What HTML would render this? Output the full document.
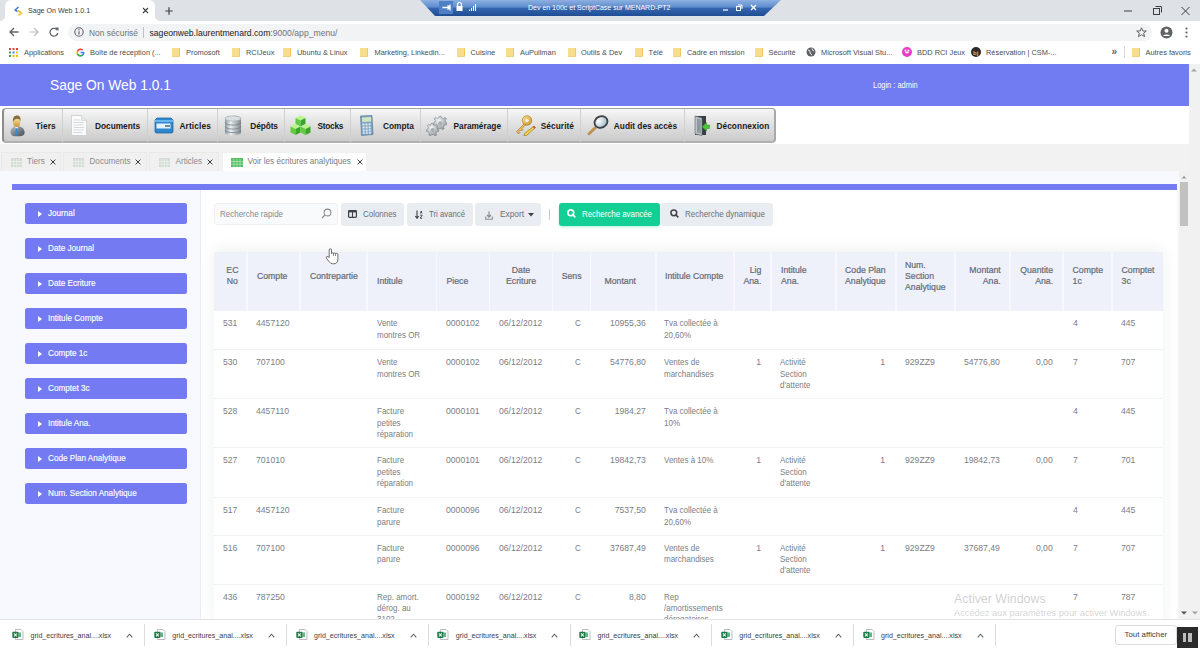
<!DOCTYPE html>
<html><head><meta charset="utf-8">
<style>
*{box-sizing:border-box;margin:0;padding:0}
html,body{width:1200px;height:650px;overflow:hidden;background:#fff;font-family:"Liberation Sans",sans-serif;position:relative}
.a{position:absolute}
.t{position:absolute;white-space:nowrap}
/* chrome */
#tabbar{left:0;top:0;width:1200px;height:21px;background:#dee1e6}
#tab{left:5px;top:0;width:150px;height:21px;background:#fff;border-radius:6px 6px 0 0}
#addr{left:0;top:21px;width:1200px;height:22px;background:#fff}
#omni{left:68px;top:24px;width:1084px;height:17px;background:#f1f3f4;border-radius:9px}
#bm{left:0;top:43px;width:1200px;height:21px;background:#fff}
.bmt{font-size:7.4px;color:#4a4d51;top:47.5px}
.fold{position:absolute;top:48px;width:8px;height:9px;background:#f7de8e;border-right:1px solid #ecc865;border-bottom:1px solid #efd27a;border-radius:0.5px}
/* header */
#hdr{left:0;top:64px;width:1189px;height:42px;background:#717bf2}
#tb{left:2px;top:108px;width:774px;height:35px;border-radius:4px;background:linear-gradient(#f6f6f6,#e2e2e2 45%,#cbcbcb);border-style:solid;border-width:1.5px 2px 2px 2px;border-color:#a2a2a2 #a8a8a8 #b0b0b0 #8c8c8c}
.tbt{font-size:8.3px;font-weight:bold;color:#1a1a1a;top:120.6px}
.tbsep{position:absolute;top:109px;width:1px;height:33px;background:#d0d0d0}
#tabsrow{left:0;top:144px;width:1189px;height:27px;background:#f2f2f2}
.ptab{position:absolute;top:152px;height:19px;background:#f0f0f0;border:1px solid #e9e9e9;border-bottom:none}
.ptt{font-size:8.15px;color:#8c8c8c;top:157px}
/* body */
#side{left:0;top:171px;width:1177px;height:449px;background:#f8f9fe}
#main{left:200px;top:190px;width:977px;height:430px;background:#fff;border-left:1px solid #ebecef}
#pbar{left:12px;top:184px;width:1165px;height:6px;background:#737af2}
.sb{position:absolute;left:25px;width:162px;height:21.3px;background:#737af2;border-radius:2.5px}
.sbt{position:absolute;left:23px;top:5.3px;font-size:8.8px;color:#fff;white-space:nowrap;transform:scaleX(0.925);transform-origin:0 0;-webkit-text-stroke:0.15px #fff}
.tri{position:absolute;left:12.8px;top:7.5px;width:0;height:0;border-left:4.2px solid #fff;border-top:3.6px solid transparent;border-bottom:3.6px solid transparent}
#scroll{left:1177px;top:172px;width:23px;height:448px;background:#f1f1f1}
#dl{left:0;top:619px;width:1200px;height:31px;background:#fff;border-top:1px solid #e2e3e6}

.btn{position:absolute;top:202.5px;height:23.3px;background:#e9ecf0;border-radius:3px}
.bt{position:absolute;top:208.8px;font-size:9px;color:#6c7079;white-space:nowrap;transform-origin:0 0}
#card{left:214px;top:252px;width:949px;height:370px;background:#fff;box-shadow:0 -2px 14px rgba(30,40,60,0.07)}
#thead{left:214px;top:252px;width:949px;height:58.5px;background:#eef0fa}
.cd{position:absolute;top:252px;width:1.5px;height:58.5px;background:#f7f8fd}
.rl{position:absolute;left:214px;width:949px;height:1px;background:#f1f2f5}
.h{position:absolute;font-size:8.7px;color:#656a75;white-space:nowrap;line-height:11px;-webkit-text-stroke:0.2px #656a75}
.c{position:absolute;font-size:9.1px;color:#7b7e86;white-space:nowrap;line-height:11.25px;transform-origin:0 0}
.c.w{transform:scaleX(0.88)}
.c.n{transform:scaleX(0.95)}
.c.r{transform-origin:100% 0}
.c.ce{transform-origin:50% 0}
</style></head><body>
<div id="tabbar" class="a"></div>
<div id="tab" class="a"></div>
<div class="a" style="left:155px;top:16px;width:6px;height:5px;background:#fff"></div><div class="a" style="left:155px;top:16px;width:6px;height:5px;background:#dee1e6;border-bottom-left-radius:5px"></div>
<div class="a" style="left:0;top:16px;width:5px;height:5px;background:#fff"></div><div class="a" style="left:0;top:16px;width:5px;height:5px;background:#dee1e6;border-bottom-right-radius:5px"></div>
<div id="addr" class="a"></div>
<div id="omni" class="a"></div>
<div id="bm" class="a"></div>

<!-- CHROME TAB BAR -->
<svg class="a" style="left:14px;top:6px" width="9" height="10" viewBox="0 0 9 10"><path d="M4.5 1 L1.2 4 L3.5 5.6" fill="none" stroke="#4a7cc9" stroke-width="1.6"/><path d="M4 4.5 L7.6 7 L4.5 9.4" fill="none" stroke="#f4c430" stroke-width="1.6"/></svg>
<div class="t" style="left:28px;top:7px;font-size:7.1px;color:#3c4043">Sage On Web 1.0.1</div>
<svg class="a" style="left:141.5px;top:7.2px" width="7" height="7" viewBox="0 0 7 7"><path d="M1 1L6 6M6 1L1 6" stroke="#3c4043" stroke-width="1.1"/></svg>
<svg class="a" style="left:164.7px;top:6.7px" width="8" height="8" viewBox="0 0 8 8"><path d="M4 0.3V7.7M0.3 4H7.7" stroke="#3c4043" stroke-width="1.2"/></svg>
<!-- window title -->
<svg class="a" style="left:420px;top:0" width="361" height="16" viewBox="0 0 361 16"><defs><linearGradient id="wg" x1="0" y1="0" x2="0" y2="1"><stop offset="0" stop-color="#8db0e0"/><stop offset="0.45" stop-color="#5d8ccd"/><stop offset="0.5" stop-color="#3566b0"/><stop offset="1" stop-color="#1f4d93"/></linearGradient></defs><path d="M0 0H361L344 16H15Z" fill="url(#wg)"/></svg>
<div class="a" style="left:439px;top:1px;width:14px;height:13px;background:#4f7fc4"></div>
<svg class="a" style="left:442px;top:4px" width="9" height="7" viewBox="0 0 9 7"><path d="M8 0.5V6.5M0.5 3.5H8M5.5 1.5L8 3.5L5.5 5.5" fill="none" stroke="#fff" stroke-width="1.3"/></svg>
<svg class="a" style="left:456px;top:2px" width="7" height="9" viewBox="0 0 7 9"><path d="M1.5 4V2.5A2 2 0 0 1 5.5 2.5V4" fill="none" stroke="#fff" stroke-width="1.2"/><rect x="0.5" y="4" width="6" height="5" fill="#fff"/></svg>
<svg class="a" style="left:469px;top:3px" width="8" height="8" viewBox="0 0 8 8"><path d="M0.5 8V6.5M2.5 8V5M4.5 8V3M6.5 8V1" stroke="#fff" stroke-width="1.1"/></svg>
<div class="t" style="left:528px;top:4px;font-size:7px;color:#fff">Dev en 100c et ScriptCase sur MENARD-PT2</div>
<svg class="a" style="left:722px;top:4px" width="36" height="7" viewBox="0 0 36 7"><path d="M1 6H6" stroke="#fff" stroke-width="1.2"/><rect x="14.5" y="2.5" width="4" height="4" fill="none" stroke="#fff"/><path d="M16 1H20V5" fill="none" stroke="#fff"/><path d="M29 1L34 6M34 1L29 6" stroke="#fff" stroke-width="1.3"/></svg>
<svg class="a" style="left:1124px;top:6px" width="72" height="10" viewBox="0 0 72 10"><path d="M0 5H8" stroke="#3c4043" stroke-width="1"/><rect x="29.5" y="2.5" width="6" height="6" fill="none" stroke="#3c4043"/><path d="M31.5 0.5H37.5V6.5" fill="none" stroke="#3c4043"/><path d="M57.5 1L65.5 9M65.5 1L57.5 9" stroke="#3c4043" stroke-width="1"/></svg>
<!-- ADDRESS BAR -->
<svg class="a" style="left:9px;top:27px" width="10" height="10" viewBox="0 0 10 10"><path d="M9.5 5H1M5 1L1 5L5 9" fill="none" stroke="#5f6368" stroke-width="1.3"/></svg>
<svg class="a" style="left:29px;top:27px" width="10" height="10" viewBox="0 0 10 10"><path d="M0.5 5H9M5 1L9 5L5 9" fill="none" stroke="#bdc1c6" stroke-width="1.2"/></svg>
<svg class="a" style="left:49px;top:27px" width="10" height="10" viewBox="0 0 10 10"><path d="M8.3 3.2A3.9 3.9 0 1 0 8.8 6" fill="none" stroke="#5f6368" stroke-width="1.3"/><path d="M6 0.5H9.5V4Z" fill="#5f6368"/></svg>
<svg class="a" style="left:74px;top:27px" width="10" height="10" viewBox="0 0 10 10"><circle cx="5" cy="5" r="4.2" fill="none" stroke="#5f6368" stroke-width="1.1"/><path d="M5 4.3V7.6" stroke="#5f6368" stroke-width="1.2"/><circle cx="5" cy="2.8" r="0.7" fill="#5f6368"/></svg>
<div class="t" style="left:89px;top:27.5px;font-size:8.4px;color:#70757a">Non sécurisé</div>
<div class="a" style="left:143px;top:27px;width:1px;height:11px;background:#bdc1c6"></div>
<div class="t" style="left:149.5px;top:27.5px;font-size:8.63px;color:#202124">sageonweb.laurentmenard.com<span style="color:#70757a">:9000/app_menu/</span></div>
<svg class="a" style="left:1136px;top:27px" width="11" height="11" viewBox="0 0 11 11"><path d="M5.5 0.8L6.9 4H10.3L7.6 6.2L8.6 9.7L5.5 7.7L2.4 9.7L3.4 6.2L0.7 4H4.1Z" fill="none" stroke="#5f6368" stroke-width="1"/></svg>
<svg class="a" style="left:1160px;top:26px" width="13" height="13" viewBox="0 0 13 13"><circle cx="6.5" cy="6.5" r="6" fill="#5f6368"/><circle cx="6.5" cy="4.8" r="2" fill="#fff"/><path d="M2.8 10A4.3 3 0 0 1 10.2 10" fill="#fff"/></svg>
<svg class="a" style="left:1185px;top:27px" width="3" height="11" viewBox="0 0 3 11"><circle cx="1.5" cy="1.5" r="1.1" fill="#5f6368"/><circle cx="1.5" cy="5.5" r="1.1" fill="#5f6368"/><circle cx="1.5" cy="9.5" r="1.1" fill="#5f6368"/></svg>
<!-- BOOKMARKS -->
<svg class="a" style="left:9px;top:48px" width="9" height="9" viewBox="0 0 9 9"><rect x="0" y="0" width="2" height="2" fill="#ea4335"/><rect x="3.5" y="0" width="2" height="2" fill="#ea4335"/><rect x="7" y="0" width="2" height="2" fill="#ea4335"/><rect x="0" y="3.5" width="2" height="2" fill="#34a853"/><rect x="3.5" y="3.5" width="2" height="2" fill="#4285f4"/><rect x="7" y="3.5" width="2" height="2" fill="#fbbc05"/><rect x="0" y="7" width="2" height="2" fill="#34a853"/><rect x="3.5" y="7" width="2" height="2" fill="#fbbc05"/><rect x="7" y="7" width="2" height="2" fill="#fbbc05"/></svg>
<div class="t bmt" style="left:24px">Applications</div>
<svg class="a" style="left:76px;top:48px" width="9" height="9" viewBox="0 0 24 24"><path d="M22.5 12.3c0-.8-.1-1.5-.2-2.3H12v4.3h5.9a5 5 0 0 1-2.2 3.3v2.7h3.5c2.1-1.9 3.3-4.8 3.3-8z" fill="#4285f4"/><path d="M12 23c3 0 5.5-1 7.2-2.7l-3.5-2.7c-1 .7-2.2 1.1-3.7 1.1-2.9 0-5.3-1.9-6.2-4.5H2.2v2.8A11 11 0 0 0 12 23z" fill="#34a853"/><path d="M5.8 14.2a6.6 6.6 0 0 1 0-4.3V7.1H2.2a11 11 0 0 0 0 9.9z" fill="#fbbc05"/><path d="M12 5.4c1.6 0 3.1.6 4.2 1.7l3.1-3.1A11 11 0 0 0 2.2 7.1l3.6 2.8C6.7 7.3 9.1 5.4 12 5.4z" fill="#ea4335"/></svg>
<div class="t bmt" style="left:90px">Boîte de réception (...</div>
<div class="fold" style="left:172px"></div><div class="t bmt" style="left:186px">Promosoft</div>
<div class="fold" style="left:232px"></div><div class="t bmt" style="left:246px">RCIJeux</div>
<div class="fold" style="left:283px"></div><div class="t bmt" style="left:297px">Ubuntu &amp; Linux</div>
<div class="fold" style="left:360px"></div><div class="t bmt" style="left:374.5px">Marketing, Linkedin...</div>
<div class="fold" style="left:457px"></div><div class="t bmt" style="left:470.5px">Cuisine</div>
<div class="fold" style="left:506px"></div><div class="t bmt" style="left:520px">AuPullman</div>
<div class="fold" style="left:567.5px"></div><div class="t bmt" style="left:581px">Outils &amp; Dev</div>
<div class="fold" style="left:635px"></div><div class="t bmt" style="left:648.5px">Télé</div>
<div class="fold" style="left:673px"></div><div class="t bmt" style="left:687px">Cadre en mission</div>
<div class="fold" style="left:755px"></div><div class="t bmt" style="left:768.5px">Sécurité</div>
<svg class="a" style="left:806px;top:47px" width="10" height="10" viewBox="0 0 10 10"><circle cx="5" cy="5" r="4.5" fill="#5f6368"/><path d="M2 3Q4 3 4 5T6 8M6 1.5Q6 3.5 8 4" fill="none" stroke="#fff" stroke-width="0.9"/></svg>
<div class="t bmt" style="left:821px">Microsoft Visual Stu...</div>
<svg class="a" style="left:902px;top:47px" width="10" height="10" viewBox="0 0 10 10"><circle cx="5" cy="5" r="5" fill="#e83ec8"/><path d="M2.5 4.5Q5 8.5 7.5 4.5" fill="#fff"/><circle cx="3.5" cy="3.3" r="0.9" fill="#fff"/><circle cx="6.5" cy="3.3" r="0.9" fill="#fff"/></svg>
<div class="t bmt" style="left:917px">BDD RCI Jeux</div>
<svg class="a" style="left:971px;top:47px" width="10" height="10" viewBox="0 0 10 10"><circle cx="5" cy="5" r="5" fill="#2b2b2b"/><text x="2" y="7.5" font-size="6" font-family="Liberation Sans" fill="#e0b050" font-weight="bold">bj</text></svg>
<div class="t bmt" style="left:986px">Réservation | CSM-...</div>
<div class="t bmt" style="left:1111.5px;top:45.5px;font-size:10px;font-weight:bold;color:#5f6368">»</div>
<div class="a" style="left:1124px;top:46px;width:1px;height:12px;background:#dadce0"></div>
<div class="fold" style="left:1132px"></div><div class="t bmt" style="left:1145.5px">Autres favoris</div>
<div id="hdr" class="a"></div>

<div class="t" style="left:50px;top:77.5px;font-size:13.8px;color:#fff">Sage On Web 1.0.1</div>
<div class="t" style="left:873px;top:80.5px;font-size:8.2px;color:#fff;transform:scaleX(0.91);transform-origin:0 0">Login : admin</div>
<div id="tb" class="a"></div>
<div class="tbsep" style="left:62px"></div>
<div class="tbsep" style="left:147px"></div>
<div class="tbsep" style="left:217px"></div>
<div class="tbsep" style="left:284px"></div>
<div class="tbsep" style="left:350px"></div>
<div class="tbsep" style="left:420px"></div>
<div class="tbsep" style="left:507px"></div>
<div class="tbsep" style="left:580px"></div>
<div class="tbsep" style="left:684px"></div>
<!-- icons -->
<svg class="a" style="left:9px;top:114.5px" width="17" height="22" viewBox="0 0 17 22">
<defs><linearGradient id="suit" x1="0" y1="0" x2="1" y2="1"><stop offset="0" stop-color="#b4bcc3"/><stop offset="0.6" stop-color="#6d767e"/><stop offset="1" stop-color="#4a5258"/></linearGradient>
<linearGradient id="face" x1="0" y1="0" x2="0" y2="1"><stop offset="0" stop-color="#f7e09a"/><stop offset="1" stop-color="#c8923c"/></linearGradient></defs>
<path d="M1.5 17C1.5 13.5 4 11.8 7 11.5H10C13.5 12 15.6 14.5 15.6 17.5C15.6 20 13.5 21.3 10.5 21.3H6C3 21.3 1.5 19.5 1.5 17Z" fill="url(#suit)"/>
<path d="M5.8 11.7L7.4 14.5L9.2 11.9Z" fill="#eef2f5"/>
<path d="M6.9 13.2H8L8.5 19L7.4 20.2L6.6 19Z" fill="#2f8ad8"/>
<ellipse cx="7.6" cy="7.6" rx="3.6" ry="4.5" fill="url(#face)"/>
<path d="M3.8 7C3.5 2.5 5.5 0.5 8 0.5C10.5 0.5 12 2.3 11.5 6.5C11 4.8 10 4 8.5 3.8C6.5 3.8 5 4.8 3.8 7Z" fill="#8c6d3c"/>
</svg>
<svg class="a" style="left:71px;top:115px" width="16" height="21" viewBox="0 0 16 21">
<path d="M0.5 0.5H10.5L15.5 5.5V20.5H0.5Z" fill="#fbfbfb" stroke="#c8ccd2" stroke-width="0.8"/><path d="M10.5 0.5V5.5H15.5" fill="#e4e6ea" stroke="#c8ccd2" stroke-width="0.6"/>
<path d="M2.5 5H9M2.5 7.5H13M2.5 10H13M2.5 12.5H13M2.5 15H13M2.5 17.5H11" stroke="#d2d5d9" stroke-width="0.9"/>
</svg>
<svg class="a" style="left:154px;top:117px" width="20" height="17" viewBox="0 0 20 17">
<path d="M1 3L3 1H17L19 3V15L18 16H2L1 15Z" fill="#2e87cf" stroke="#1b5f9e" stroke-width="0.7"/>
<path d="M1 3H19V5H1Z" fill="#69b6ec"/>
<rect x="2.5" y="6.5" width="14" height="5" fill="#e6f2fb"/><rect x="11" y="8" width="5" height="2" fill="#6b8ea8"/>
</svg>
<svg class="a" style="left:224px;top:115px" width="18" height="21" viewBox="0 0 18 21">
<defs><linearGradient id="db" x1="0" y1="0" x2="1" y2="0"><stop offset="0" stop-color="#8e979e"/><stop offset="0.35" stop-color="#e9eef1"/><stop offset="1" stop-color="#7f888f"/></linearGradient></defs>
<path d="M1 3.5A8 3 0 0 1 17 3.5V17.5A8 3 0 0 1 1 17.5Z" fill="url(#db)"/>
<ellipse cx="9" cy="3.5" rx="8" ry="2.6" fill="#d9e0e4" stroke="#9aa2a8" stroke-width="0.5"/>
<path d="M1 7.5A8 2.6 0 0 0 17 7.5M1 11.5A8 2.6 0 0 0 17 11.5M1 15A8 2.6 0 0 0 17 15" fill="none" stroke="#6f787f" stroke-width="0.7"/>
</svg>
<svg class="a" style="left:290px;top:115px" width="21" height="21" viewBox="0 0 21 21"><path d="M10.5 0.5L15.5 3.0L10.5 5.5L5.5 3.0Z" fill="#b9f48c"/><path d="M5.5 3.0L10.5 5.5V11.5L5.5 9.0Z" fill="#62cc3c"/><path d="M10.5 5.5L15.5 3.0V9.0L10.5 11.5Z" fill="#3aa526"/><path d="M5.5 9L10.5 11.5L5.5 14L0.5 11.5Z" fill="#b9f48c"/><path d="M0.5 11.5L5.5 14V20L0.5 17.5Z" fill="#62cc3c"/><path d="M5.5 14L10.5 11.5V17.5L5.5 20Z" fill="#3aa526"/><path d="M15.5 9L20.5 11.5L15.5 14L10.5 11.5Z" fill="#b9f48c"/><path d="M10.5 11.5L15.5 14V20L10.5 17.5Z" fill="#62cc3c"/><path d="M15.5 14L20.5 11.5V17.5L15.5 20Z" fill="#3aa526"/></svg>
<svg class="a" style="left:359px;top:115px" width="15" height="21" viewBox="0 0 15 21">
<path d="M1.5 1L13 0.5L14 19.5L2.5 20.5Z" fill="#7fa4c4" stroke="#4f6f8a" stroke-width="0.6"/>
<path d="M3 2.5L12 2L12.3 6.5L3.3 7Z" fill="#cfe6c0"/>
<g fill="#dfeaf4"><rect x="3.5" y="8.5" width="2" height="2"/><rect x="6.5" y="8.5" width="2" height="2"/><rect x="9.5" y="8.3" width="2" height="2"/><rect x="3.6" y="11.5" width="2" height="2"/><rect x="6.6" y="11.5" width="2" height="2"/><rect x="9.6" y="11.3" width="2" height="2"/><rect x="3.7" y="14.5" width="2" height="2"/><rect x="6.7" y="14.5" width="2" height="2"/><rect x="9.7" y="14.3" width="2" height="2"/><rect x="3.8" y="17.3" width="2" height="1.6"/><rect x="6.8" y="17.3" width="2" height="1.6"/><rect x="9.8" y="17.1" width="2" height="1.6"/></g>
</svg>
<svg class="a" style="left:426px;top:115px" width="21" height="21" viewBox="0 0 21 21">
<defs><radialGradient id="gear" cx="0.4" cy="0.35" r="0.7"><stop offset="0" stop-color="#f4f6f7"/><stop offset="1" stop-color="#8c9396"/></radialGradient></defs>
<g fill="url(#gear)" stroke="#7b8286" stroke-width="0.5">
<path d="M13 1.5L15 1L15.8 3L17.8 3.5L19 2.2L20.5 3.8L19.3 5.2L19.8 7.3L21 8L20.5 10L18.5 10.2L17.5 12L18.2 13.8L16.3 14.8L15 13.5L13 13.5L11.8 14.8L10 13.8L10.6 12L9.6 10.2L7.6 10L7.3 8L8.8 7.2L9.2 5.2L8 3.8L9.5 2.2L11 3.4L12.5 3Z"/>
<path d="M5 8.5L7 8.2L7.6 10L9.4 10.5L10.6 9.3L12 10.8L11 12.2L11.5 14L13 14.6L12.6 16.6L10.8 16.8L10 18.5L10.8 20L9 21L7.7 19.8L5.8 19.9L4.6 21L2.8 20L3.3 18.4L2.4 16.8L0.5 16.5L0.3 14.6L2 13.9L2.4 12.2L1.3 10.8L2.8 9.4L4.4 10.4Z"/>
</g>
<circle cx="14.2" cy="8.2" r="2" fill="#a7adb0"/><circle cx="6.6" cy="15" r="2" fill="#a7adb0"/>
</svg>
<svg class="a" style="left:515px;top:115px" width="21" height="21" viewBox="0 0 21 21">
<defs><linearGradient id="key" x1="0" y1="0" x2="1" y2="1"><stop offset="0" stop-color="#fbe48a"/><stop offset="1" stop-color="#c8902a"/></linearGradient></defs>
<circle cx="12" cy="5.5" r="4.8" fill="url(#key)" stroke="#a8741c" stroke-width="0.6"/><circle cx="12" cy="5.5" r="1.8" fill="#eee"/>
<path d="M9 9L1.5 16.5L3.5 19L5 17.5L4 16.5L5.5 15L6.5 16L8 14.5L7 13.5L11 9.5Z" fill="url(#key)" stroke="#a8741c" stroke-width="0.6"/>
<path d="M19 11L20.5 12.5L11.5 20.5L9 21L9.5 18.5Z" fill="#f2d04a" stroke="#8c6a18" stroke-width="0.6"/><path d="M18.3 11.6L20 13.2" stroke="#d04a30" stroke-width="1.4"/>
</svg>
<svg class="a" style="left:587px;top:114.5px" width="22" height="21" viewBox="0 0 22 21">
<defs><radialGradient id="lens" cx="0.35" cy="0.35" r="0.7"><stop offset="0" stop-color="#ffffff"/><stop offset="1" stop-color="#9fb9c8"/></radialGradient></defs>
<path d="M8 11.5L1 18.5Q0.8 20 2.4 19.8L9.6 13Z" fill="#c9963e" stroke="#8a5f20" stroke-width="0.5"/>
<ellipse cx="14" cy="7" rx="6.6" ry="5.6" transform="rotate(-25 14 7)" fill="url(#lens)" stroke="#3d4247" stroke-width="1.8"/>
</svg>
<svg class="a" style="left:694px;top:115px" width="16" height="21" viewBox="0 0 16 21">
<path d="M1 1H12V20H1Z" fill="#3a3f44"/><path d="M1 1L8 3V20.5L1 19Z" fill="#b8c2c8" stroke="#5a6268" stroke-width="0.6"/>
<path d="M3 3.5L6.8 4.5V18.5L3 17.5Z" fill="#8f9aa0"/>
<path d="M15.5 10V13.5H12.5V16L8 11.8L12.5 7.5V10Z" fill="#4cc43a" stroke="#2a8a22" stroke-width="0.5"/>
</svg>
<div class="t tbt" style="left:35.5px;letter-spacing:0.11px">Tiers</div>
<div class="t tbt" style="left:95px;letter-spacing:0px">Documents</div>
<div class="t tbt" style="left:179.5px;letter-spacing:0.13px">Articles</div>
<div class="t tbt" style="left:250.3px;letter-spacing:-0.1px">Dépôts</div>
<div class="t tbt" style="left:317.5px;letter-spacing:-0.25px">Stocks</div>
<div class="t tbt" style="left:383px;letter-spacing:0px">Compta</div>
<div class="t tbt" style="left:453.5px;letter-spacing:0px">Paramérage</div>
<div class="t tbt" style="left:540.7px;letter-spacing:0.08px">Sécurité</div>
<div class="t tbt" style="left:613.8px;letter-spacing:0.01px">Audit des accès</div>
<div class="t tbt" style="left:716.4px;letter-spacing:0.08px">Déconnexion</div>

<div id="tabsrow" class="a"></div>
<div class="ptab" style="left:1px;width:60px"></div><svg class="a" style="left:11px;top:157.5px" width="11" height="9" viewBox="0 0 11 9"><rect x="0" y="0" width="11" height="9" fill="#d3dcd3"/><path d="M2.75 1V9M5.5 1V9M8.25 1V9M0 3.5H11M0 6.2H11" stroke="#f4f6f4" stroke-width="0.6"/></svg><div class="t ptt" style="left:27px">Tiers</div><svg class="a" style="left:50px;top:158.5px" width="6" height="6" viewBox="0 0 6 6"><path d="M0.6 0.6L5.4 5.4M5.4 0.6L0.6 5.4" stroke="#3a3a3a" stroke-width="1"/></svg><div class="ptab" style="left:63px;width:84px"></div><svg class="a" style="left:73px;top:157.5px" width="11" height="9" viewBox="0 0 11 9"><rect x="0" y="0" width="11" height="9" fill="#d3dcd3"/><path d="M2.75 1V9M5.5 1V9M8.25 1V9M0 3.5H11M0 6.2H11" stroke="#f4f6f4" stroke-width="0.6"/></svg><div class="t ptt" style="left:89.5px">Documents</div><svg class="a" style="left:135px;top:158.5px" width="6" height="6" viewBox="0 0 6 6"><path d="M0.6 0.6L5.4 5.4M5.4 0.6L0.6 5.4" stroke="#3a3a3a" stroke-width="1"/></svg><div class="ptab" style="left:149px;width:70px"></div><svg class="a" style="left:159px;top:157.5px" width="11" height="9" viewBox="0 0 11 9"><rect x="0" y="0" width="11" height="9" fill="#d3dcd3"/><path d="M2.75 1V9M5.5 1V9M8.25 1V9M0 3.5H11M0 6.2H11" stroke="#f4f6f4" stroke-width="0.6"/></svg><div class="t ptt" style="left:175.5px">Articles</div><svg class="a" style="left:207px;top:158.5px" width="6" height="6" viewBox="0 0 6 6"><path d="M0.6 0.6L5.4 5.4M5.4 0.6L0.6 5.4" stroke="#3a3a3a" stroke-width="1"/></svg><div class="ptab" style="left:222px;width:145px;background:#fff;border-color:#f0f0f0;height:20px"></div><svg class="a" style="left:231px;top:157.5px" width="12" height="9" viewBox="0 0 12 9"><rect x="0" y="0" width="12" height="9" fill="#56c064"/><path d="M3 1V9M6 1V9M9 1V9M0 3.5H12M0 6.2H12" stroke="#c8eccc" stroke-width="0.6"/></svg><div class="t ptt" style="left:247.5px;color:#7a7d85">Voir les écritures analytiques</div><svg class="a" style="left:356.5px;top:158.5px" width="6" height="6" viewBox="0 0 6 6"><path d="M0.6 0.6L5.4 5.4M5.4 0.6L0.6 5.4" stroke="#3a3a3a" stroke-width="1"/></svg>
<div id="side" class="a"></div>
<div class="sb" style="top:203px"><div class="tri"></div><div class="sbt">Journal</div></div>
<div class="sb" style="top:238px"><div class="tri"></div><div class="sbt">Date Journal</div></div>
<div class="sb" style="top:273px"><div class="tri"></div><div class="sbt">Date Ecriture</div></div>
<div class="sb" style="top:308px"><div class="tri"></div><div class="sbt">Intitule Compte</div></div>
<div class="sb" style="top:343px"><div class="tri"></div><div class="sbt">Compte 1c</div></div>
<div class="sb" style="top:378px"><div class="tri"></div><div class="sbt">Comptet 3c</div></div>
<div class="sb" style="top:413px"><div class="tri"></div><div class="sbt">Intitule Ana.</div></div>
<div class="sb" style="top:448px"><div class="tri"></div><div class="sbt">Code Plan Analytique</div></div>
<div class="sb" style="top:483px"><div class="tri"></div><div class="sbt">Num. Section Analytique</div></div>

<div id="main" class="a"></div>
<div id="pbar" class="a"></div>
<div class="a" style="left:213.5px;top:203.3px;width:124px;height:22.2px;background:#f9fafc;border:1px solid #eef0f3;border-radius:3px"></div>
<div class="t" style="left:220.3px;top:208.8px;font-size:9px;color:#878a91;transform:scaleX(0.887);transform-origin:0 0">Recherche rapide</div>
<svg class="a" style="left:321px;top:208px" width="11" height="11" viewBox="0 0 11 11"><circle cx="6.5" cy="4.5" r="3.4" fill="none" stroke="#8a8d94" stroke-width="1.1"/><path d="M4 7L1 10" stroke="#8a8d94" stroke-width="1.2"/></svg>
<div class="btn" style="left:340.5px;width:63.5px"></div>
<svg class="a" style="left:348px;top:210px" width="9" height="8" viewBox="0 0 9 8"><rect x="0.6" y="0.6" width="7.8" height="6.8" rx="0.8" fill="none" stroke="#3e4249" stroke-width="1.2"/><rect x="0.6" y="0.6" width="7.8" height="1.8" fill="#3e4249"/><path d="M4.5 1V7.4" stroke="#3e4249" stroke-width="1.1"/></svg>
<div class="bt" style="left:363px;transform:scaleX(0.883)">Colonnes</div>
<div class="btn" style="left:407px;width:66px"></div>
<svg class="a" style="left:415px;top:209.5px" width="8" height="9" viewBox="0 0 8 9"><path d="M2 0.5V8M0.3 6L2 8.3L3.7 6" fill="none" stroke="#3e4249" stroke-width="1.1"/><path d="M5.5 3.5L6.2 1L6.9 3.5" fill="none" stroke="#3e4249" stroke-width="0.9"/><path d="M5.2 5.2H7.2L5.2 8.2H7.2" fill="none" stroke="#3e4249" stroke-width="0.9"/></svg>
<div class="bt" style="left:429px;transform:scaleX(0.864)">Tri avancé</div>
<div class="btn" style="left:475.3px;width:65.7px"></div>
<svg class="a" style="left:484.5px;top:210.5px" width="8" height="9" viewBox="0 0 8 9"><path d="M4 0.5V6M2 4L4 6.2L6 4" fill="none" stroke="#8a8d94" stroke-width="1.2"/><path d="M0.7 5.5V8.2H7.3V5.5" fill="none" stroke="#8a8d94" stroke-width="1.1"/></svg>
<div class="bt" style="left:499.8px;transform:scaleX(0.922)">Export</div>
<svg class="a" style="left:528px;top:213px" width="6" height="4" viewBox="0 0 6 4"><path d="M0 0H6L3 3.5Z" fill="#3e4249"/></svg>
<div class="a" style="left:549.3px;top:208.7px;width:1px;height:11px;background:#c8cbd0"></div>
<div class="btn" style="left:559px;width:101px;background:#14cf95;box-shadow:0 1px 3px rgba(20,207,149,0.35)"></div>
<svg class="a" style="left:566.5px;top:209.3px" width="9" height="9" viewBox="0 0 9 9"><circle cx="3.8" cy="3.8" r="2.9" fill="none" stroke="#fff" stroke-width="1.6"/><path d="M6 6L8.3 8.3" stroke="#fff" stroke-width="1.8"/></svg>
<div class="bt" style="left:581.7px;color:#fff;transform:scaleX(0.874)">Recherche avancée</div>
<div class="btn" style="left:661.3px;width:111.7px"></div>
<svg class="a" style="left:669.5px;top:209.3px" width="9" height="9" viewBox="0 0 9 9"><circle cx="3.8" cy="3.8" r="2.9" fill="none" stroke="#3e4249" stroke-width="1.5"/><path d="M6 6L8.3 8.3" stroke="#3e4249" stroke-width="1.7"/></svg>
<div class="bt" style="left:684.7px;transform:scaleX(0.888)">Recherche dynamique</div>
<!--TABLE-->
<div id="card" class="a"></div>
<div id="thead" class="a"></div>
<div class="cd" style="left:246.25px"></div>
<div class="cd" style="left:299.25px"></div>
<div class="cd" style="left:366.25px"></div>
<div class="cd" style="left:435.75px"></div>
<div class="cd" style="left:488.75px"></div>
<div class="cd" style="left:551.75px"></div>
<div class="cd" style="left:589.75px"></div>
<div class="cd" style="left:655.25px"></div>
<div class="cd" style="left:733.25px"></div>
<div class="cd" style="left:770.25px"></div>
<div class="cd" style="left:835.25px"></div>
<div class="cd" style="left:895.25px"></div>
<div class="cd" style="left:954.25px"></div>
<div class="cd" style="left:1009.25px"></div>
<div class="cd" style="left:1062.25px"></div>
<div class="cd" style="left:1111.25px"></div>
<div class="h" style="left:182.4px;width:100px;text-align:center;top:264.8px">EC</div>
<div class="h" style="left:182.4px;width:100px;text-align:center;top:275.7px">No</div>
<div class="h" style="left:257px;top:270.5px">Compte</div>
<div class="h" style="left:310px;top:270.5px">Contrepartie</div>
<div class="h" style="left:377px;top:275.5px">Intitule</div>
<div class="h" style="left:446.5px;top:275.5px">Piece</div>
<div class="h" style="left:471px;width:100px;text-align:center;top:264.8px">Date</div>
<div class="h" style="left:471px;width:100px;text-align:center;top:275.7px">Ecriture</div>
<div class="h" style="left:521.6px;width:100px;text-align:center;top:270.5px">Sens</div>
<div class="h" style="left:604.5px;top:275.5px">Montant</div>
<div class="h" style="left:665px;top:270.5px">Intitule Compte</div>
<div class="h" style="right:438.70000000000005px;top:264.8px">Lig</div>
<div class="h" style="right:438.70000000000005px;top:275.7px">Ana.</div>
<div class="h" style="left:781px;top:264.8px">Intitule</div>
<div class="h" style="left:781px;top:275.7px">Ana.</div>
<div class="h" style="right:314.4px;top:264.8px">Code Plan</div>
<div class="h" style="right:314.4px;top:275.7px">Analytique</div>
<div class="h" style="left:905px;top:259.5px">Num.</div>
<div class="h" style="left:905px;top:270.5px">Section</div>
<div class="h" style="left:905px;top:281.9px">Analytique</div>
<div class="h" style="right:199.29999999999995px;top:264.8px">Montant</div>
<div class="h" style="right:199.29999999999995px;top:275.7px">Ana.</div>
<div class="h" style="right:146.9000000000001px;top:264.8px">Quantite</div>
<div class="h" style="right:146.9000000000001px;top:275.7px">Ana.</div>
<div class="h" style="left:1072.6px;top:264.8px">Compte</div>
<div class="h" style="left:1072.6px;top:275.7px">1c</div>
<div class="h" style="left:1121.6px;top:264.8px">Comptet</div>
<div class="h" style="left:1121.6px;top:275.7px">3c</div>
<div class="c n" style="left:223px;top:318.45000000000005px">531</div>
<div class="c n" style="left:256.3px;top:318.45000000000005px">4457120</div>
<div class="c w" style="left:376.6px;top:318.45000000000005px">Vente<br>montres OR</div>
<div class="c n" style="left:445.7px;top:318.45000000000005px">0000102</div>
<div class="c n" style="left:499px;top:318.45000000000005px">06/12/2012</div>
<div class="c w ce" style="left:557.5px;width:40px;text-align:center;top:318.45000000000005px">C</div>
<div class="c n r" style="right:554.2px;top:318.45000000000005px;text-align:right">10955,36</div>
<div class="c w" style="left:664.3px;top:318.45000000000005px">Tva collectée à<br>20,60%</div>
<div class="c n" style="left:1072.6px;top:318.45000000000005px">4</div>
<div class="c n" style="left:1120.6px;top:318.45000000000005px">445</div>
<div class="rl" style="top:348.79999999999995px"></div>
<div class="c n" style="left:223px;top:357.35px">530</div>
<div class="c n" style="left:256.3px;top:357.35px">707100</div>
<div class="c w" style="left:376.6px;top:357.35px">Vente<br>montres OR</div>
<div class="c n" style="left:445.7px;top:357.35px">0000102</div>
<div class="c n" style="left:499px;top:357.35px">06/12/2012</div>
<div class="c w ce" style="left:557.5px;width:40px;text-align:center;top:357.35px">C</div>
<div class="c n r" style="right:554.2px;top:357.35px;text-align:right">54776,80</div>
<div class="c w" style="left:664.3px;top:357.35px">Ventes de<br>marchandises</div>
<div class="c n r" style="right:438.5px;top:357.35px;text-align:right">1</div>
<div class="c w" style="left:780px;top:357.35px">Activité<br>Section<br>d&#39;attente</div>
<div class="c n r" style="right:314.5px;top:357.35px;text-align:right">1</div>
<div class="c n" style="left:904.6px;top:357.35px">929ZZ9</div>
<div class="c n r" style="right:200px;top:357.35px;text-align:right">54776,80</div>
<div class="c n r" style="right:147px;top:357.35px;text-align:right">0,00</div>
<div class="c n" style="left:1072.6px;top:357.35px">7</div>
<div class="c n" style="left:1120.6px;top:357.35px">707</div>
<div class="rl" style="top:397.7px"></div>
<div class="c n" style="left:223px;top:406.25000000000006px">528</div>
<div class="c n" style="left:256.3px;top:406.25000000000006px">4457110</div>
<div class="c w" style="left:376.6px;top:406.25000000000006px">Facture<br>petites<br>réparation</div>
<div class="c n" style="left:445.7px;top:406.25000000000006px">0000101</div>
<div class="c n" style="left:499px;top:406.25000000000006px">06/12/2012</div>
<div class="c w ce" style="left:557.5px;width:40px;text-align:center;top:406.25000000000006px">C</div>
<div class="c n r" style="right:554.2px;top:406.25000000000006px;text-align:right">1984,27</div>
<div class="c w" style="left:664.3px;top:406.25000000000006px">Tva collectée à<br>10%</div>
<div class="c n" style="left:1072.6px;top:406.25000000000006px">4</div>
<div class="c n" style="left:1120.6px;top:406.25000000000006px">445</div>
<div class="rl" style="top:446.7px"></div>
<div class="c n" style="left:223px;top:455.25000000000006px">527</div>
<div class="c n" style="left:256.3px;top:455.25000000000006px">701010</div>
<div class="c w" style="left:376.6px;top:455.25000000000006px">Facture<br>petites<br>réparation</div>
<div class="c n" style="left:445.7px;top:455.25000000000006px">0000101</div>
<div class="c n" style="left:499px;top:455.25000000000006px">06/12/2012</div>
<div class="c w ce" style="left:557.5px;width:40px;text-align:center;top:455.25000000000006px">C</div>
<div class="c n r" style="right:554.2px;top:455.25000000000006px;text-align:right">19842,73</div>
<div class="c w" style="left:664.3px;top:455.25000000000006px">Ventes à 10%</div>
<div class="c n r" style="right:438.5px;top:455.25000000000006px;text-align:right">1</div>
<div class="c w" style="left:780px;top:455.25000000000006px">Activité<br>Section<br>d&#39;attente</div>
<div class="c n r" style="right:314.5px;top:455.25000000000006px;text-align:right">1</div>
<div class="c n" style="left:904.6px;top:455.25000000000006px">929ZZ9</div>
<div class="c n r" style="right:200px;top:455.25000000000006px;text-align:right">19842,73</div>
<div class="c n r" style="right:147px;top:455.25000000000006px;text-align:right">0,00</div>
<div class="c n" style="left:1072.6px;top:455.25000000000006px">7</div>
<div class="c n" style="left:1120.6px;top:455.25000000000006px">701</div>
<div class="rl" style="top:496.7px"></div>
<div class="c n" style="left:223px;top:505.25000000000006px">517</div>
<div class="c n" style="left:256.3px;top:505.25000000000006px">4457120</div>
<div class="c w" style="left:376.6px;top:505.25000000000006px">Facture<br>parure</div>
<div class="c n" style="left:445.7px;top:505.25000000000006px">0000096</div>
<div class="c n" style="left:499px;top:505.25000000000006px">06/12/2012</div>
<div class="c w ce" style="left:557.5px;width:40px;text-align:center;top:505.25000000000006px">C</div>
<div class="c n r" style="right:554.2px;top:505.25000000000006px;text-align:right">7537,50</div>
<div class="c w" style="left:664.3px;top:505.25000000000006px">Tva collectée à<br>20,60%</div>
<div class="c n" style="left:1072.6px;top:505.25000000000006px">4</div>
<div class="c n" style="left:1120.6px;top:505.25000000000006px">445</div>
<div class="rl" style="top:535.0px"></div>
<div class="c n" style="left:223px;top:542.7500000000001px">516</div>
<div class="c n" style="left:256.3px;top:542.7500000000001px">707100</div>
<div class="c w" style="left:376.6px;top:542.7500000000001px">Facture<br>parure</div>
<div class="c n" style="left:445.7px;top:542.7500000000001px">0000096</div>
<div class="c n" style="left:499px;top:542.7500000000001px">06/12/2012</div>
<div class="c w ce" style="left:557.5px;width:40px;text-align:center;top:542.7500000000001px">C</div>
<div class="c n r" style="right:554.2px;top:542.7500000000001px;text-align:right">37687,49</div>
<div class="c w" style="left:664.3px;top:542.7500000000001px">Ventes de<br>marchandises</div>
<div class="c n r" style="right:438.5px;top:542.7500000000001px;text-align:right">1</div>
<div class="c w" style="left:780px;top:542.7500000000001px">Activité<br>Section<br>d&#39;attente</div>
<div class="c n r" style="right:314.5px;top:542.7500000000001px;text-align:right">1</div>
<div class="c n" style="left:904.6px;top:542.7500000000001px">929ZZ9</div>
<div class="c n r" style="right:200px;top:542.7500000000001px;text-align:right">37687,49</div>
<div class="c n r" style="right:147px;top:542.7500000000001px;text-align:right">0,00</div>
<div class="c n" style="left:1072.6px;top:542.7500000000001px">7</div>
<div class="c n" style="left:1120.6px;top:542.7500000000001px">707</div>
<div class="rl" style="top:584.0px"></div>
<div class="c n" style="left:223px;top:591.7500000000001px">436</div>
<div class="c n" style="left:256.3px;top:591.7500000000001px">787250</div>
<div class="c w" style="left:376.6px;top:591.7500000000001px">Rep. amort.<br>dérog. au<br>3102</div>
<div class="c n" style="left:445.7px;top:591.7500000000001px">0000192</div>
<div class="c n" style="left:499px;top:591.7500000000001px">06/12/2012</div>
<div class="c w ce" style="left:557.5px;width:40px;text-align:center;top:591.7500000000001px">C</div>
<div class="c n r" style="right:554.2px;top:591.7500000000001px;text-align:right">8,80</div>
<div class="c w" style="left:664.3px;top:591.7500000000001px">Rep<br>/amortissements<br>dérogatoires</div>
<div class="c n" style="left:1072.6px;top:591.7500000000001px">7</div>
<div class="c n" style="left:1120.6px;top:591.7500000000001px">787</div>
<!--/TABLE-->
<div class="a" style="left:1189px;top:64px;width:11px;height:556px;background:#f1f1f1"></div>
<svg class="a" style="left:1191px;top:68px" width="6" height="4" viewBox="0 0 6 4"><path d="M0 3.5L3 0.5L6 3.5Z" fill="#a3a3a3"/></svg>
<svg class="a" style="left:1191.5px;top:611px" width="6" height="4" viewBox="0 0 6 4"><path d="M0 0.5L3 3.5L6 0.5Z" fill="#a3a3a3"/></svg>
<div class="a" style="left:1177px;top:171px;width:12px;height:449px;background:#f1f1f1;border-left:2px solid #f9f9f9"></div>
<svg class="a" style="left:1181px;top:174.5px" width="6" height="4" viewBox="0 0 6 4"><path d="M0.5 3.5L3 0.8L5.5 3.5Z" fill="#a0a0a0"/></svg>
<div class="a" style="left:1180px;top:182px;width:8px;height:44px;background:#c1c1c1"></div>
<svg class="a" style="left:1181px;top:611px" width="6" height="4" viewBox="0 0 6 4"><path d="M0 0.5L3 3.5L6 0.5Z" fill="#505050"/></svg>
<div class="t" style="left:954px;top:591.5px;font-size:12.4px;color:rgba(150,150,150,0.45)">Activer Windows</div>
<div class="t" style="left:954px;top:607.8px;font-size:9.24px;color:rgba(150,150,150,0.42)">Accédez aux paramètres pour activer Windows.</div>
<svg class="a" style="left:325px;top:248px;z-index:50" width="14" height="17" viewBox="0 0 14 17"><path d="M4.2 9.5V2Q4.2 0.8 5.35 0.8Q6.5 0.8 6.5 2V5.6Q6.5 4.9 7.5 4.9Q8.5 4.9 8.5 5.7Q8.5 5 9.5 5Q10.5 5 10.5 5.9Q10.6 5.3 11.6 5.3Q12.9 5.4 12.9 6.8V11Q12.9 15.8 8.5 15.8H7.8Q5.5 15.8 4 13.5L1.3 10Q0.8 9 1.8 8.5Q2.8 8.2 4.2 9.5Z" fill="#fff" stroke="#555" stroke-width="0.85"/><path d="M8.5 5.7V8M10.5 5.9V8" stroke="#555" stroke-width="0.7"/></svg>
<div id="dl" class="a"></div>
<svg class="a" style="left:12.00px;top:629px" width="12" height="11" viewBox="0 0 12 11"><path d="M3.4 0.5H9L11 2.5V10.5H3.4Z" fill="#fff" stroke="#a8acb0" stroke-width="0.8"/><rect x="6.5" y="3.5" width="2.5" height="4.5" fill="#5cb88a"/><rect x="0.3" y="2.7" width="6.2" height="6.2" rx="0.8" fill="#1d7a46"/><path d="M2 4.3L4.8 7.3M4.8 4.3L2 7.3" stroke="#e8f5ec" stroke-width="1.1"/></svg>
<div class="t" style="left:30.50px;top:631.5px;font-size:7.12px;color:#3c4043">grid_ecritures_anal....xlsx</div>
<svg class="a" style="left:126.00px;top:632.5px" width="7" height="5" viewBox="0 0 7 5"><path d="M0.7 4.3L3.5 1.2L6.3 4.3" fill="none" stroke="#5f6368" stroke-width="1.1"/></svg>
<div class="a" style="left:144.25px;top:624px;width:1px;height:22px;background:#dadce0"></div>
<svg class="a" style="left:153.75px;top:629px" width="12" height="11" viewBox="0 0 12 11"><path d="M3.4 0.5H9L11 2.5V10.5H3.4Z" fill="#fff" stroke="#a8acb0" stroke-width="0.8"/><rect x="6.5" y="3.5" width="2.5" height="4.5" fill="#5cb88a"/><rect x="0.3" y="2.7" width="6.2" height="6.2" rx="0.8" fill="#1d7a46"/><path d="M2 4.3L4.8 7.3M4.8 4.3L2 7.3" stroke="#e8f5ec" stroke-width="1.1"/></svg>
<div class="t" style="left:172.25px;top:631.5px;font-size:7.12px;color:#3c4043">grid_ecritures_anal....xlsx</div>
<svg class="a" style="left:267.75px;top:632.5px" width="7" height="5" viewBox="0 0 7 5"><path d="M0.7 4.3L3.5 1.2L6.3 4.3" fill="none" stroke="#5f6368" stroke-width="1.1"/></svg>
<div class="a" style="left:286.00px;top:624px;width:1px;height:22px;background:#dadce0"></div>
<svg class="a" style="left:295.50px;top:629px" width="12" height="11" viewBox="0 0 12 11"><path d="M3.4 0.5H9L11 2.5V10.5H3.4Z" fill="#fff" stroke="#a8acb0" stroke-width="0.8"/><rect x="6.5" y="3.5" width="2.5" height="4.5" fill="#5cb88a"/><rect x="0.3" y="2.7" width="6.2" height="6.2" rx="0.8" fill="#1d7a46"/><path d="M2 4.3L4.8 7.3M4.8 4.3L2 7.3" stroke="#e8f5ec" stroke-width="1.1"/></svg>
<div class="t" style="left:314.00px;top:631.5px;font-size:7.12px;color:#3c4043">grid_ecritures_anal....xlsx</div>
<svg class="a" style="left:409.50px;top:632.5px" width="7" height="5" viewBox="0 0 7 5"><path d="M0.7 4.3L3.5 1.2L6.3 4.3" fill="none" stroke="#5f6368" stroke-width="1.1"/></svg>
<div class="a" style="left:427.75px;top:624px;width:1px;height:22px;background:#dadce0"></div>
<svg class="a" style="left:437.25px;top:629px" width="12" height="11" viewBox="0 0 12 11"><path d="M3.4 0.5H9L11 2.5V10.5H3.4Z" fill="#fff" stroke="#a8acb0" stroke-width="0.8"/><rect x="6.5" y="3.5" width="2.5" height="4.5" fill="#5cb88a"/><rect x="0.3" y="2.7" width="6.2" height="6.2" rx="0.8" fill="#1d7a46"/><path d="M2 4.3L4.8 7.3M4.8 4.3L2 7.3" stroke="#e8f5ec" stroke-width="1.1"/></svg>
<div class="t" style="left:455.75px;top:631.5px;font-size:7.12px;color:#3c4043">grid_ecritures_anal....xlsx</div>
<svg class="a" style="left:551.25px;top:632.5px" width="7" height="5" viewBox="0 0 7 5"><path d="M0.7 4.3L3.5 1.2L6.3 4.3" fill="none" stroke="#5f6368" stroke-width="1.1"/></svg>
<div class="a" style="left:569.50px;top:624px;width:1px;height:22px;background:#dadce0"></div>
<svg class="a" style="left:579.00px;top:629px" width="12" height="11" viewBox="0 0 12 11"><path d="M3.4 0.5H9L11 2.5V10.5H3.4Z" fill="#fff" stroke="#a8acb0" stroke-width="0.8"/><rect x="6.5" y="3.5" width="2.5" height="4.5" fill="#5cb88a"/><rect x="0.3" y="2.7" width="6.2" height="6.2" rx="0.8" fill="#1d7a46"/><path d="M2 4.3L4.8 7.3M4.8 4.3L2 7.3" stroke="#e8f5ec" stroke-width="1.1"/></svg>
<div class="t" style="left:597.50px;top:631.5px;font-size:7.12px;color:#3c4043">grid_ecritures_anal....xlsx</div>
<svg class="a" style="left:693.00px;top:632.5px" width="7" height="5" viewBox="0 0 7 5"><path d="M0.7 4.3L3.5 1.2L6.3 4.3" fill="none" stroke="#5f6368" stroke-width="1.1"/></svg>
<div class="a" style="left:711.25px;top:624px;width:1px;height:22px;background:#dadce0"></div>
<svg class="a" style="left:720.75px;top:629px" width="12" height="11" viewBox="0 0 12 11"><path d="M3.4 0.5H9L11 2.5V10.5H3.4Z" fill="#fff" stroke="#a8acb0" stroke-width="0.8"/><rect x="6.5" y="3.5" width="2.5" height="4.5" fill="#5cb88a"/><rect x="0.3" y="2.7" width="6.2" height="6.2" rx="0.8" fill="#1d7a46"/><path d="M2 4.3L4.8 7.3M4.8 4.3L2 7.3" stroke="#e8f5ec" stroke-width="1.1"/></svg>
<div class="t" style="left:739.25px;top:631.5px;font-size:7.12px;color:#3c4043">grid_ecritures_anal....xlsx</div>
<svg class="a" style="left:834.75px;top:632.5px" width="7" height="5" viewBox="0 0 7 5"><path d="M0.7 4.3L3.5 1.2L6.3 4.3" fill="none" stroke="#5f6368" stroke-width="1.1"/></svg>
<div class="a" style="left:853.00px;top:624px;width:1px;height:22px;background:#dadce0"></div>
<svg class="a" style="left:862.50px;top:629px" width="12" height="11" viewBox="0 0 12 11"><path d="M3.4 0.5H9L11 2.5V10.5H3.4Z" fill="#fff" stroke="#a8acb0" stroke-width="0.8"/><rect x="6.5" y="3.5" width="2.5" height="4.5" fill="#5cb88a"/><rect x="0.3" y="2.7" width="6.2" height="6.2" rx="0.8" fill="#1d7a46"/><path d="M2 4.3L4.8 7.3M4.8 4.3L2 7.3" stroke="#e8f5ec" stroke-width="1.1"/></svg>
<div class="t" style="left:881.00px;top:631.5px;font-size:7.12px;color:#3c4043">grid_ecritures_anal....xlsx</div>
<svg class="a" style="left:976.50px;top:632.5px" width="7" height="5" viewBox="0 0 7 5"><path d="M0.7 4.3L3.5 1.2L6.3 4.3" fill="none" stroke="#5f6368" stroke-width="1.1"/></svg>
<div class="a" style="left:994.75px;top:624px;width:1px;height:22px;background:#dadce0"></div>
<div class="a" style="left:1114.5px;top:624.5px;width:62.5px;height:20px;border:1px solid #dadce0;border-radius:3px;background:#fff"></div>
<div class="t" style="left:1124.6px;top:629.5px;font-size:7.83px;color:#3c4043">Tout afficher</div>
<div class="a" style="left:1177px;top:627px;width:21px;height:21px;background:#2b2b2b"></div>
<div class="a" style="left:1182.5px;top:632.5px;width:3px;height:9.5px;background:#bdbdbd"></div>
<div class="a" style="left:1188px;top:632.5px;width:3.5px;height:9.5px;background:#bdbdbd"></div>

</body></html>
